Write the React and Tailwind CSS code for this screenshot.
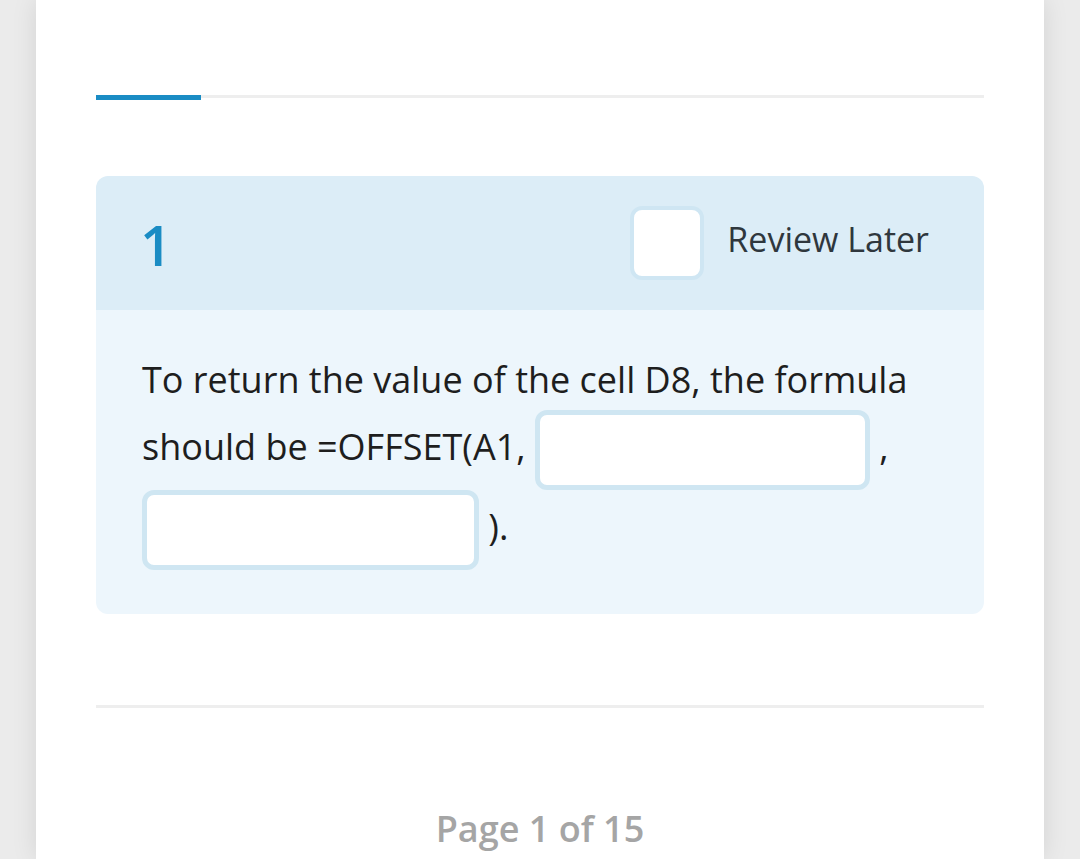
export default function App() {
  const font = { fontFamily: '"Open Sans", "Noto Sans", sans-serif' };
  return (
    <div className="w-[1080px] h-[859px] overflow-hidden bg-[#ebebeb] flex justify-center" style={font}>
      <div className="w-[1008px] h-full bg-white shadow-[0_0_24px_rgba(0,0,0,0.10)] px-[60px] flex flex-col">
        <div className="mt-[95px] flex items-start">
          <div className="w-[105px] h-[5px] bg-[#1a8cc4]" />
          <div className="flex-1 h-[3px] bg-[#eeeeee]" />
        </div>

        <div className="mt-[76px] rounded-[12px] overflow-hidden">
          <div className="h-[134px] bg-[#dcedf7] flex items-center justify-between pl-[44px] pr-[55px]">
            <span className="text-[56px] leading-none font-semibold text-[#1a8cc4] pt-[2px]">1</span>
            <div className="flex items-center gap-[23px]">
              <div className="w-[74px] h-[74px] rounded-[12px] border-[4px] border-[#cfe6f3] bg-white" />
              <span className="text-[34px] text-[#2f373d] pb-[8px]">Review Later</span>
            </div>
          </div>
          <div className="h-[304px] bg-[#edf6fc] pl-[46px] pr-[46px] pt-[40px] text-[36px] text-[#1e1e1e] leading-[60px]">
            To return the value of the cell D8, the formula should be =OFFSET(A1,{' '}
            <span className="inline-block align-middle w-[335px] h-[80px] rounded-[12px] border-[5px] border-[#cfe6f2] bg-white" />
            {' '},{' '}
            <span className="inline-block align-middle w-[337px] h-[80px] rounded-[12px] border-[5px] border-[#cfe6f2] bg-white" />
            {' '}).
          </div>
        </div>

        <div className="mt-[91px] h-[3px] bg-[#eeeeee]" />

        <div className="mt-[94px] text-center text-[36px] font-semibold text-[#a5a5a5]">Page 1 of 15</div>
      </div>
    </div>
  );
}
